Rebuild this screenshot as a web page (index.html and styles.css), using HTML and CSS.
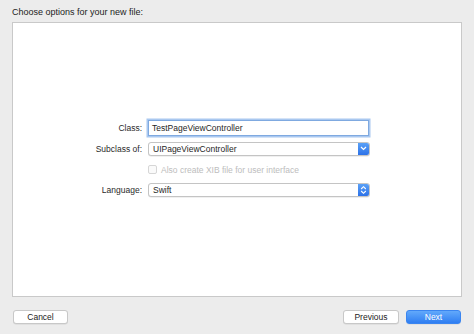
FILE: index.html
```html
<!DOCTYPE html>
<html>
<head>
<meta charset="utf-8">
<link rel="stylesheet" href="styles.css">
</head>
<body>
<div class="title">Choose options for your new file:</div>
<div class="panel">
  <div class="form">
    <label class="lbl">Class:</label>
    <div class="field focus">TestPageViewController</div>
    <label class="lbl">Subclass of:</label>
    <div class="popup"><span class="ptext">UIPageViewController</span><span class="arrow"><svg width="7" height="5" viewBox="0 0 7 5"><path d="M1 1 L3.5 3.5 L6 1" fill="none" stroke="#fff" stroke-width="1.2"/></svg></span></div>
    <span></span>
    <div class="check"><span class="box"></span><span class="ctext">Also create XIB file for user interface</span></div>
    <label class="lbl">Language:</label>
    <div class="popup"><span class="ptext">Swift</span><span class="arrow"><svg width="7" height="10" viewBox="0 0 7 10"><path d="M1.2 4 L3.5 1.7 L5.8 4 M1.2 6 L3.5 8.3 L5.8 6" fill="none" stroke="#fff" stroke-width="1.1"/></svg></span></div>
  </div>
</div>
<div class="buttons">
  <div class="btn">Cancel</div>
  <div class="right">
    <div class="btn prev">Previous</div>
    <div class="btn primary">Next</div>
  </div>
</div>
</body>
</html>
```
FILE: styles.css
```css
html, body {
  margin: 0;
  padding: 0;
  background: #ececec;
  font-family: "Liberation Sans", Arial, sans-serif;
  color: #262626;
  width: 474px;
  height: 334px;
  overflow: hidden;
}
.title {
  font-size: 9px;
  height: 22px;
  line-height: 24px;
  padding-left: 12px;
  color: #222;
}
.panel {
  margin: 0 12px 0 12px;
  height: 273px;
  background: #fff;
  border: 1px solid #c9c9c9;
  display: flex;
  flex-direction: column;
  justify-content: center;
}
.form {
  display: grid;
  grid-template-columns: 116px 223px;
  column-gap: 5px;
  row-gap: 6px;
  align-items: center;
  margin-top: -3px;
  margin-left: 13px;
  font-size: 8.5px;
}
.lbl {
  text-align: right;
  color: #2a2a2a;
}
.field {
  height: 14px;
  line-height: 14px;
  padding-left: 3px;
  border: 1px solid #b8b8b8;
  background: #fff;
}
.field.focus {
  border: 1px solid #7fa9e0;
  box-shadow: 0 0 0 1.5px #a9c8f0;
  margin-left: 1px;
  margin-right: 1px;
}
.popup {
  height: 14px;
  width: 222px;
  margin-left: 1px;
  border: 1px solid #c4c4c4;
  border-radius: 3px;
  background: #fff;
  display: flex;
  align-items: center;
  overflow: hidden;
  box-sizing: border-box;
  box-shadow: 0 0.5px 0.5px rgba(0,0,0,0.12);
}
.ptext {
  flex: 1;
  padding-left: 4px;
}
.arrow {
  width: 11px;
  height: 100%;
  background: linear-gradient(#5aa1f7, #2d72e8);
  display: flex;
  align-items: center;
  justify-content: center;
}
.check {
  display: flex;
  align-items: center;
  height: 10px;
  margin: 3px 0 2px 1px;
  color: #bdbdbd;
}
.box {
  width: 7px;
  height: 7px;
  border: 1px solid #d6d6d6;
  border-radius: 2px;
  margin-right: 4px;
  background: #fafafa;
}
.buttons {
  display: flex;
  justify-content: space-between;
  margin-top: 13px;
  padding: 0 13px 0 13px;
}
.right {
  display: flex;
  gap: 7px;
}
.btn {
  width: 55px;
  height: 14px;
  line-height: 13px;
  box-sizing: border-box;
  text-align: center;
  font-size: 8.5px;
  background: #fff;
  border: 1px solid #c8c8c8;
  border-radius: 3px;
  color: #222;
  box-shadow: 0 0.5px 0.5px rgba(0,0,0,0.1);
}
.btn.prev {
  width: 56px;
}
.btn.primary {
  background: linear-gradient(#62a9fb, #2f7ef2);
  border-color: #3a85f0;
  color: #fff;
}
```
